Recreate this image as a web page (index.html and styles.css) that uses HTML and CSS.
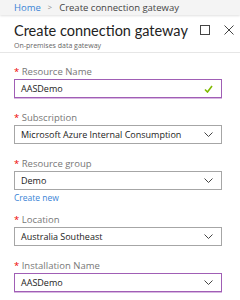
FILE: index.html
```html
<!DOCTYPE html>
<html>
<head>
<meta charset="utf-8">
<link rel="stylesheet" href="styles.css">
</head>
<body>
<div class="topbar">
  <span class="crumb-link">Home</span>
  <span class="crumb-sep">&gt;</span>
  <span class="crumb-cur">Create connection gateway</span>
</div>
<div class="header">
  <div class="titles">
    <div class="title">Create connection gateway</div>
    <div class="subtitle">On-premises data gateway</div>
  </div>
  <div class="actions">
    <svg class="icon" width="10" height="10" viewBox="0 0 10 10"><rect x="0.5" y="0.5" width="9" height="9" fill="none" stroke="#444" stroke-width="1"/></svg>
    <svg class="icon" width="10" height="10" viewBox="0 0 10 10"><path d="M0.5 0.5 L9.5 9.5 M9.5 0.5 L0.5 9.5" stroke="#444" stroke-width="1"/></svg>
  </div>
</div>
<div class="form">
  <div class="field">
    <div class="label"><span class="req">*</span> Resource Name</div>
    <div class="input focus">
      <span class="value">AASDemo</span>
      <svg width="9" height="8" viewBox="0 0 9 8"><path d="M1 4.5 L3.5 7 L8 1" fill="none" stroke="#7fba00" stroke-width="1.6"/></svg>
    </div>
  </div>
  <div class="field">
    <div class="label"><span class="req">*</span> Subscription</div>
    <div class="input">
      <span class="value">Microsoft Azure Internal Consumption</span>
      <svg class="chev" width="9" height="5" viewBox="0 0 9 5"><path d="M0.5 0.5 L4.5 4.5 L8.5 0.5" fill="none" stroke="#444" stroke-width="1"/></svg>
    </div>
  </div>
  <div class="field">
    <div class="label"><span class="req">*</span> Resource group</div>
    <div class="input">
      <span class="value">Demo</span>
      <svg class="chev" width="9" height="5" viewBox="0 0 9 5"><path d="M0.5 0.5 L4.5 4.5 L8.5 0.5" fill="none" stroke="#444" stroke-width="1"/></svg>
    </div>
    <div class="link">Create new</div>
  </div>
  <div class="field">
    <div class="label"><span class="req">*</span> Location</div>
    <div class="input">
      <span class="value">Australia Southeast</span>
      <svg class="chev" width="9" height="5" viewBox="0 0 9 5"><path d="M0.5 0.5 L4.5 4.5 L8.5 0.5" fill="none" stroke="#444" stroke-width="1"/></svg>
    </div>
  </div>
  <div class="field">
    <div class="label"><span class="req">*</span> Installation Name</div>
    <div class="input focus">
      <span class="value">AASDemo</span>
      <svg class="chev" width="9" height="5" viewBox="0 0 9 5"><path d="M0.5 0.5 L4.5 4.5 L8.5 0.5" fill="none" stroke="#444" stroke-width="1"/></svg>
    </div>
  </div>
</div>
</body>
</html>
```
FILE: styles.css
```css
* { box-sizing: border-box; }
html, body { margin: 0; padding: 0; }
body {
  width: 240px;
  height: 300px;
  overflow: hidden;
  background: #fff;
  font-family: "Open Sans", "Noto Sans", sans-serif;
  color: #333;
}
.topbar {
  height: 15px;
  background: #f4f4f4;
  padding: 0 0 0 14px;
  display: flex;
  align-items: center;
  gap: 7px;
  font-size: 9.5px;
  line-height: 15px;
  box-shadow: 0 1px 2px rgba(0,0,0,0.12);
  position: relative;
}
.crumb-link { color: #3a84d6; }
.crumb-sep { color: #888; font-size: 7.5px; }
.crumb-cur { color: #444; }
.header {
  height: 38px;
  border-bottom: 1px solid #e6e6e6;
  display: flex;
  justify-content: space-between;
  padding: 6px 6px 0 14px;
}
.titles { flex: 1; min-width: 0; }
.title {
  font-family: Lato, "Open Sans", sans-serif;
  font-size: 14.5px;
  line-height: 19px;
  color: #222;
  white-space: nowrap;
}
.subtitle {
  font-size: 7px;
  line-height: 9px;
  color: #666;
  margin-top: 1px;
  white-space: nowrap;
}
.actions {
  display: flex;
  flex: none;
  gap: 14px;
  padding-top: 4px;
}
.form {
  padding: 14px 18px 0 14px;
}
.field { margin-bottom: 15px; }
.label {
  font-size: 9.5px;
  line-height: 10px;
  color: #777;
  margin-bottom: 2px;
}
.req { color: #e00; }
.input {
  height: 19px;
  border: 1px solid #a6a6a6;
  display: flex;
  align-items: center;
  justify-content: space-between;
  padding: 0 8px 0 6px;
  font-size: 9px;
  color: #222;
}
.input.focus {
  border-color: #a05eb5;
  box-shadow: 0 1px 0 #d8b8e2;
}
.link {
  font-size: 8.5px;
  line-height: 11px;
  color: #3a84d6;
  margin-top: 2px;
  margin-bottom: -3px;
}
```
